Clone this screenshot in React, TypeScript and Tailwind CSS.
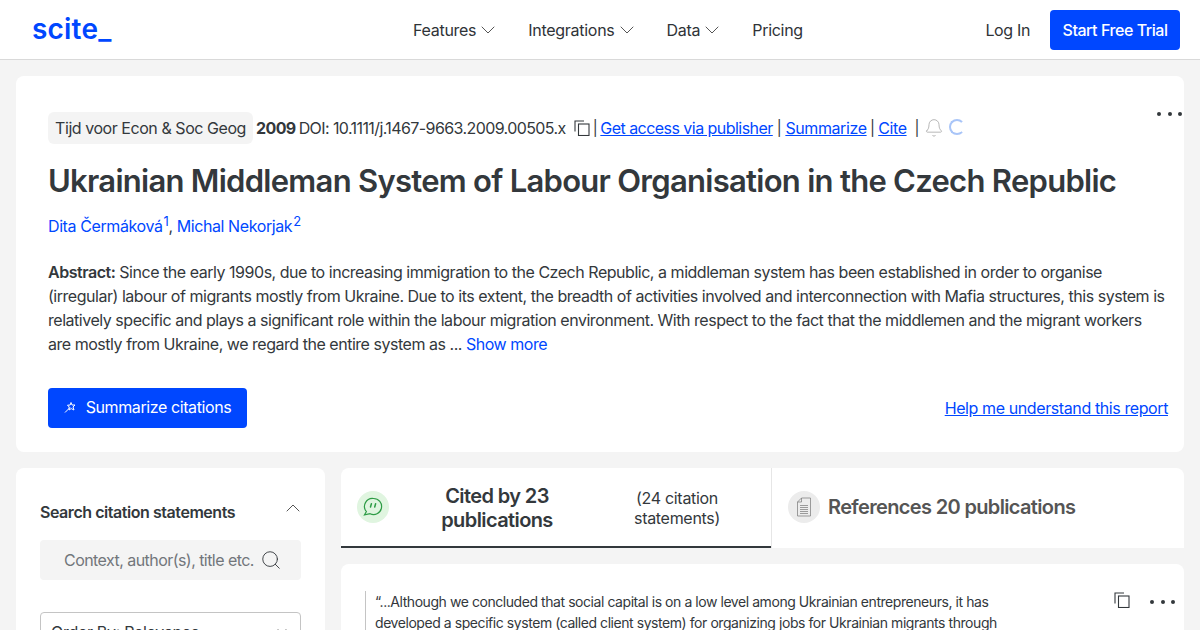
import React from 'react';
import { ChevronDown, ChevronUp, Search, Bell } from 'lucide-react';

const NavItem = ({ label, menu = false }: { label: string; menu?: boolean }) => (
  <a className="flex items-center text-[16px] text-[#2f3337] tracking-[-0.28px]">
    {label}
    {menu && <ChevronDown className="w-6 h-6 text-[#555]" strokeWidth={1} />}
  </a>
);

const Dots = () => (
  <div className="flex gap-[6.5px]">
    <span className="w-[4px] h-[4px] rounded-full bg-[#33383c]"></span>
    <span className="w-[4px] h-[4px] rounded-full bg-[#33383c]"></span>
    <span className="w-[4px] h-[4px] rounded-full bg-[#33383c]"></span>
  </div>
);

const CopyIcon = () => (
  <svg width="16" height="16" viewBox="0 0 16 16" fill="none" stroke="#33383c" strokeWidth="1.1">
    <path d="M1 11.5V1h9" />
    <rect x="4.5" y="4" width="10.5" height="11.5" />
  </svg>
);

const Pipe = ({ className }: { className: string }) => <span className={`text-[15px] ${className}`}>|</span>;

const App = () => {
  return (
    <div className="w-[1200px] h-[630px] overflow-hidden bg-[#f4f4f4] font-['Inter',sans-serif] text-[#33383c]">
      <header className="h-[60px] bg-white border-b border-[#d9d9d9] flex items-center pl-8 pr-5">
        <div className="w-[381px] text-[#0047ff] text-[28px] font-semibold leading-none tracking-[0.2px] pb-[2px]">scite_</div>
        <nav className="flex items-center gap-7">
          <NavItem label="Features" menu />
          <NavItem label="Integrations" menu />
          <NavItem label="Data" menu />
          <NavItem label="Pricing" />
        </nav>
        <div className="ml-auto flex items-center gap-5">
          <a className="text-[16px] text-[#2f3337] tracking-[-0.35px]">Log In</a>
          <button className="h-10 w-[130px] rounded bg-[#0047ff] text-white text-[16px] font-medium tracking-[-0.45px]">Start Free Trial</button>
        </div>
      </header>

      <main className="px-4 pt-4 flex flex-col gap-4">
        <section className="relative bg-white rounded-lg h-[376px] px-8 pt-9">
          <div className="absolute right-[2px] top-[36px]"><Dots /></div>
          <div className="flex items-center h-8 text-[16px] tracking-[-0.4px] whitespace-nowrap">
            <span className="h-8 w-[205px] flex items-center justify-center bg-[#f4f4f4] rounded-md tracking-[-0.45px]">Tijd voor Econ &amp; Soc Geog</span>
            <span className="font-bold ml-[3px] tracking-[-0.6px]">2009</span>
            <span className="ml-[3px] tracking-[-0.59px]">DOI: 10.1111/j.1467-9663.2009.00505.x</span>
            <span className="ml-2"><CopyIcon /></span>
            <Pipe className="ml-[3px]" />
            <a className="ml-[3px] text-[#0047ff] underline tracking-[-0.54px]">Get access via publisher</a>
            <Pipe className="mx-[4px]" />
            <a className="text-[#0047ff] underline">Summarize</a>
            <Pipe className="mx-[3.5px]" />
            <a className="text-[#0047ff] underline">Cite</a>
            <Pipe className="ml-[8px]" />
            <Bell className="ml-[5px] w-5 h-5 text-[#a8a8a8]" strokeWidth={1} />
            <span className="ml-[5px] mb-[3px] w-4 h-4 rounded-full border-2 border-[#a9c5f8] border-r-transparent"></span>
          </div>
          <h1 className="mt-[17px] text-[31px] leading-10 font-semibold tracking-[-0.72px] whitespace-nowrap">Ukrainian Middleman System of Labour Organisation in the Czech Republic</h1>
          <div className="mt-[11px] h-7 flex items-center text-[16px] tracking-[-0.4px]">
            <a className="text-[#0047ff]">Dita Čermáková<sup className="ml-px text-[13px]">1</sup></a>
            <span>,</span>
            <a className="ml-1 text-[#0047ff]">Michal Nekorjak<sup className="ml-px text-[13px]">2</sup></a>
          </div>
          <p className="mt-[20px] text-[16px] leading-6 tracking-[-0.47px] w-[1120px]">
            <b className="font-semibold">Abstract:</b> Since the early 1990s, due to increasing immigration to the Czech Republic, a middleman system has been established in order to organise (irregular) labour of migrants mostly from Ukraine. Due to its extent, the breadth of activities involved and interconnection with Mafia structures, this system is relatively specific and plays a significant role within the labour migration environment. With respect to the fact that the middlemen and the migrant workers are mostly from Ukraine, we regard the entire system as ... <a className="text-[#0047ff]">Show more</a>
          </p>
          <div className="mt-[32px] -mr-4 flex items-center justify-between">
            <button className="h-10 w-[199px] rounded bg-[#0047ff] text-white text-[16px] tracking-[-0.4px] flex items-center justify-center gap-2.5 pb-[2px]">
              <svg width="12" height="12" viewBox="0 0 12 12" fill="none" stroke="white" strokeWidth="1">
                <path d="M1 11.5 6 6.5" />
                <path d="M7 1.5 8 4 11 4 9 6 10 9 7.2 7.6 5 9 5.2 6 3.5 4.2 6.2 4Z" />
              </svg>
              Summarize citations
            </button>
            <a className="text-[16px] text-[#0047ff] underline tracking-[-0.4px]">Help me understand this report</a>
          </div>
        </section>

        <div className="flex gap-4 items-start">
          <aside className="w-[309px] h-[300px] bg-white rounded-lg px-6 pt-8">
            <div className="flex items-start justify-between h-[26px]">
              <h2 className="text-[16px] font-semibold tracking-[-0.45px]">Search citation statements</h2>
              <ChevronUp className="w-6 h-6 -mt-[4px] -mr-1 text-[#555]" strokeWidth={1} />
            </div>
            <div className="mt-[14px] h-10 w-[261px] rounded bg-[#f4f4f4] flex items-center pl-6 text-[16px] text-[#72767b] tracking-[-0.55px] gap-1.5 whitespace-nowrap">
              Context, author(s), title etc.
              <Search className="w-[22px] h-[22px] text-[#33383c]" strokeWidth={1} />
            </div>
            <div className="mt-8 h-10 w-[261px] rounded border border-[#c4c4c4] flex items-center justify-between px-[10px] text-[16px] tracking-[-0.3px]">
              Order By: Relevance
              <ChevronDown className="w-4 h-4 text-[#777]" />
            </div>
          </aside>

          <div className="w-[843px] flex flex-col gap-4">
            <div className="flex h-[80px] bg-white rounded-t-lg">
              <div className="w-[430px] flex items-center border-b-2 border-[#33383c] pl-4">
                <span className="shrink-0 w-8 h-8 rounded-full bg-[#e0f5e0] flex items-center justify-center">
                  <svg width="20" height="20" viewBox="0 0 20 20" fill="none" stroke="#2e9c46" strokeWidth="1.2">
                    <path d="M10.5 1.5a8 8 0 1 1-3.4 15.2L1.5 17.8l1.9-3.2A8 8 0 0 1 10.5 1.5Z" />
                    <path d="M8.4 6.8 7.5 10M12.6 6.8 11.7 10" strokeWidth="1.5" strokeLinecap="round" />
                  </svg>
                </span>
                <span className="w-[180px] ml-[18px] pt-[2px] text-center text-[20px] leading-6 font-semibold tracking-[-0.6px]">Cited by 23 publications</span>
                <span className="w-[150px] ml-[15px] pt-[2px] text-center text-[16px] leading-5 tracking-[-0.3px]">(24 citation statements)</span>
              </div>
              <div className="flex-1 flex items-center border-l border-[#e6e6e6] pl-4 pb-[2px]">
                <span className="w-8 h-8 rounded-full bg-[#ececec] flex items-center justify-center">
                  <svg width="16" height="20" viewBox="0 0 16 20" fill="none" stroke="#777" strokeWidth="0.7">
                    <path d="M5.5 1h9v18h-13V5L5.5 1v4h-4" />
                    <path d="M4 8.5h8M4 10.5h8M4 12.5h8M4 14.5h8M4 16.5h8" />
                  </svg>
                </span>
                <span className="ml-2 text-[20px] font-semibold text-[#555] tracking-[-0.65px]">References 20 publications</span>
              </div>
            </div>

            <div className="relative bg-white rounded-lg h-[200px] pl-6 pt-[27px]">
              <div className="absolute right-[9px] top-[28px] flex items-center gap-[20px]">
                <CopyIcon />
                <div className="mt-[3px]"><Dots /></div>
              </div>
              <blockquote className="border-l border-[#c4c4c4] pl-[9px] w-[660px] text-[14px] leading-[21px] tracking-[-0.44px]">
                “...Although we concluded that social capital is on a low level among Ukrainian entrepreneurs, it has developed a specific system (called client system) for organizing jobs for Ukrainian migrants through
              </blockquote>
            </div>
          </div>
        </div>
      </main>
    </div>
  );
};

export default App;
